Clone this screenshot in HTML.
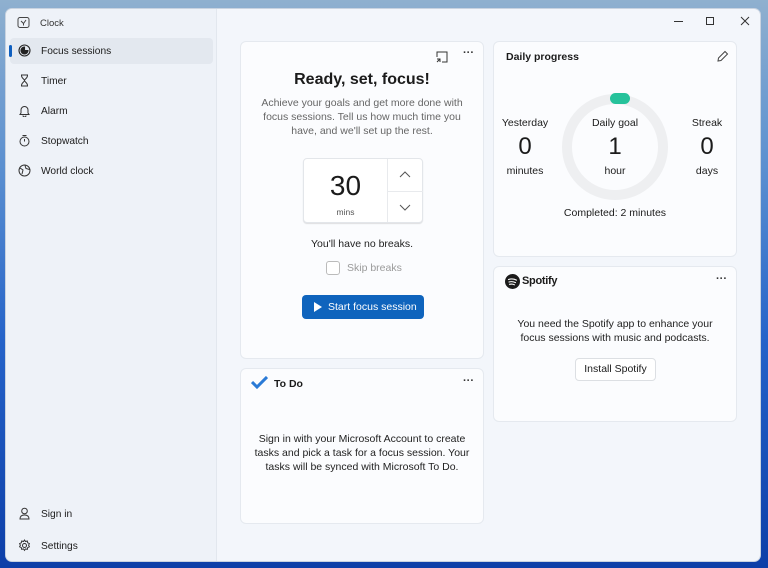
<!DOCTYPE html>
<html><head><style>
*{margin:0;padding:0;box-sizing:border-box}
body{width:768px;height:568px;overflow:hidden;font-family:"Liberation Sans",sans-serif;color:#1b1b1b;position:relative;
background:linear-gradient(180deg,#8fb0cf 0%,#5a8fd0 30%,#2563c9 60%,#0d3fa8 100%)}
.win{position:absolute;left:5px;top:8px;width:756px;height:554px;background:#f3f6fb;border-radius:7px;overflow:hidden;border:1px solid #c9d3e0}
.side{position:absolute;left:0;top:0;width:211px;height:100%;background:#eef2f8;border-right:1px solid #e2e7ee}
.abs{position:absolute}
.nav{position:absolute;left:4px;width:203px;height:26px;font-size:10.2px;display:flex;align-items:center;padding-left:31px;color:#1b1b1b}
.nav svg{position:absolute;left:8px;top:6px}
.card{position:absolute;background:#fbfcfe;border:1px solid #e5e9ef;border-radius:6px}
.c{text-align:center;position:absolute;left:0;right:0}
.dots{position:absolute;font-size:11px;letter-spacing:0px;font-weight:bold;color:#333}
</style></head><body>
<div class="win">
 <div class="side">
  <svg class="abs" style="left:11px;top:7px" width="13" height="13" viewBox="0 0 13 13" fill="none" stroke="#444" stroke-width="1"><rect x="1" y="1.5" width="11" height="10" rx="2"/><path d="M4 5l2.5 2.5L9 4M6.5 7.5v2"/></svg>
  <div class="abs" style="left:34px;top:9px;font-size:9.5px;color:#333">Clock</div>
  <div class="nav" style="top:29px;background:#e3e8ef;border-radius:4px"><svg width="13" height="13" viewBox="0 0 13 13" fill="none" stroke="#222" stroke-width="1.1"><circle cx="6.5" cy="6.5" r="5.5"/><path d="M6.5 3a3.5 3.5 0 1 0 3.5 3.5H6.5z" fill="#222"/></svg>Focus sessions</div>
  <div class="abs" style="left:3px;top:36px;width:3px;height:12px;background:#0f5fbf;border-radius:2px"></div>
  <div class="nav" style="top:59px"><svg width="13" height="13" viewBox="0 0 13 13" fill="none" stroke="#333" stroke-width="1"><path d="M3 1h7M3 12h7M3.5 1.5c0 3 3 3.5 3 5s-3 2-3 5M9.5 1.5c0 3-3 3.5-3 5s3 2 3 5"/></svg>Timer</div>
  <div class="nav" style="top:89px"><svg width="13" height="13" viewBox="0 0 13 13" fill="none" stroke="#333" stroke-width="1"><path d="M3 9V6a3.5 3.5 0 0 1 7 0v3l1 1.5H2z M5 11.5a1.5 1.5 0 0 0 3 0"/></svg>Alarm</div>
  <div class="nav" style="top:119px"><svg width="13" height="13" viewBox="0 0 13 13" fill="none" stroke="#333" stroke-width="1"><circle cx="6.5" cy="7.5" r="4.5"/><path d="M4.5 1.5h4M6.5 7.5V5"/></svg>Stopwatch</div>
  <div class="nav" style="top:149px"><svg width="13" height="13" viewBox="0 0 13 13" fill="none" stroke="#333" stroke-width="1"><circle cx="6.5" cy="6.5" r="5.5"/><path d="M2 4l3 2-1 4M7 1.5l1 3 3.5 1"/></svg>World clock</div>
  <div class="nav" style="top:492px"><svg width="13" height="13" viewBox="0 0 13 13" fill="none" stroke="#333" stroke-width="1"><circle cx="6.5" cy="4" r="2.8"/><path d="M2 12c0-3 2-4 4.5-4S11 9 11 12z"/></svg>Sign in</div>
  <div class="nav" style="top:524px"><svg width="13" height="13" viewBox="0 0 13 13" fill="none" stroke="#333" stroke-width="1"><circle cx="6.5" cy="6.5" r="2"/><path d="M6.5 1l1 1.5 1.8-.5.4 1.8 1.7.8-.8 1.6.8 1.6-1.7.8-.4 1.8-1.8-.5-1 1.5-1-1.5-1.8.5-.4-1.8-1.7-.8.8-1.6-.8-1.6 1.7-.8.4-1.8 1.8.5z"/></svg>Settings</div>
 </div>
 <!-- title buttons -->
 <div class="abs" style="left:668px;top:12px;width:9px;height:1px;background:#333"></div>
 <div class="abs" style="left:700px;top:8px;width:8px;height:8px;border:1px solid #333"></div>
 <svg class="abs" style="left:734px;top:7px" width="10" height="10" viewBox="0 0 10 10" stroke="#333" stroke-width="1"><path d="M1 1l8 8M9 1l-8 8"/></svg>

 <!-- focus card -->
 <div class="card" style="left:234px;top:32px;width:244px;height:318px">
  <svg class="abs" style="left:195px;top:9px" width="12" height="12" viewBox="0 0 12 12" fill="none" stroke="#333" stroke-width="1"><path d="M1 6V1h10v10H6M1 8h3v3M1 11l3-3"/></svg>
  <div class="dots" style="left:222px;top:5px">···</div>
  <div class="c" style="top:29px;font-size:16px;font-weight:bold;color:#1b1b1b">Ready, set, focus!</div>
  <div class="c" style="top:54px;font-size:10.5px;line-height:14px;color:#666">Achieve your goals and get more done with<br>focus sessions. Tell us how much time you<br>have, and we'll set up the rest.</div>
  <div class="abs" style="left:62px;top:116px;width:120px;height:65px;background:#fff;border:1px solid #e3e6ea;border-radius:4px;box-shadow:0 1px 1px rgba(0,0,0,.12)">
   <div class="abs" style="left:0;width:83px;top:11px;text-align:center;font-size:28px;color:#1b1b1b">30</div>
   <div class="abs" style="left:0;width:83px;top:48px;text-align:center;font-size:8.5px;color:#555">mins</div>
   <div class="abs" style="left:83px;top:0;width:1px;height:63px;background:#e8eaed"></div>
   <div class="abs" style="left:84px;top:32px;width:35px;height:1px;background:#e8eaed"></div>
   <svg class="abs" style="left:95px;top:12px" width="12" height="8" viewBox="0 0 12 8" fill="none" stroke="#555"><path d="M1 6l5-5 5 5"/></svg>
   <svg class="abs" style="left:95px;top:44px" width="12" height="8" viewBox="0 0 12 8" fill="none" stroke="#555"><path d="M1 2l5 5 5-5"/></svg>
  </div>
  <div class="c" style="top:196px;font-size:10.5px;color:#222">You'll have no breaks.</div>
  <div class="abs" style="left:85px;top:219px;width:14px;height:14px;border:1px solid #bbb;border-radius:3px;background:#fff"></div>
  <div class="abs" style="left:106px;top:220px;font-size:10.5px;color:#9a9a9a">Skip breaks</div>
  <div class="abs" style="left:61px;top:253px;width:122px;height:24px;background:#0f64bd;border-radius:4px;color:#fff;font-size:10.5px;line-height:24px;padding-left:26px">Start focus session</div>
  <svg class="abs" style="left:72px;top:259px" width="10" height="12" viewBox="0 0 10 12"><path d="M1 1l8 5-8 5z" fill="#fff"/></svg>
 </div>

 <!-- To Do -->
 <div class="card" style="left:234px;top:359px;width:244px;height:156px">
  <svg class="abs" style="left:10px;top:7px" width="17" height="13" viewBox="0 0 17 13"><path d="M1 6l5 5L16 1" fill="none" stroke="#2a7ad6" stroke-width="3"/></svg>
  <div class="abs" style="left:33px;top:9px;font-size:10.5px;font-weight:bold">To Do</div>
  <div class="dots" style="left:222px;top:6px">···</div>
  <div class="c" style="top:63px;font-size:10.5px;line-height:14px;color:#222">Sign in with your Microsoft Account to create<br>tasks and pick a task for a focus session. Your<br>tasks will be synced with Microsoft To Do.</div>
 </div>

 <!-- Daily progress -->
 <div class="card" style="left:487px;top:32px;width:244px;height:216px">
  <div class="abs" style="left:12px;top:9px;font-size:10.5px;font-weight:bold">Daily progress</div>
  <svg class="abs" style="left:222px;top:8px" width="13" height="13" viewBox="0 0 13 13" fill="none" stroke="#444"><path d="M2 11l.5-3L9 1.5l2.5 2.5L5 10.5z"/></svg>
  <div class="abs" style="left:68px;top:52px;width:106px;height:106px;border-radius:50%;border:10px solid #eeeff1"></div>
  <div class="abs" style="left:116px;top:51px;width:20px;height:11px;border-radius:6px;background:#26c29b"></div>
  <div class="abs" style="left:0;width:62px;top:75px;text-align:center;font-size:10.5px">Yesterday</div>
  <div class="abs" style="left:0;width:62px;top:91px;text-align:center;font-size:24px">0</div>
  <div class="abs" style="left:0;width:62px;top:123px;text-align:center;font-size:10.5px">minutes</div>
  <div class="abs" style="left:71px;width:100px;top:75px;text-align:center;font-size:10.5px">Daily goal</div>
  <div class="abs" style="left:71px;width:100px;top:91px;text-align:center;font-size:24px">1</div>
  <div class="abs" style="left:71px;width:100px;top:123px;text-align:center;font-size:10.5px">hour</div>
  <div class="abs" style="left:188px;width:50px;top:75px;text-align:center;font-size:10.5px">Streak</div>
  <div class="abs" style="left:188px;width:50px;top:91px;text-align:center;font-size:24px">0</div>
  <div class="abs" style="left:188px;width:50px;top:123px;text-align:center;font-size:10.5px">days</div>
  <div class="c" style="top:165px;font-size:10.5px">Completed: 2 minutes</div>
 </div>

 <!-- Spotify -->
 <div class="card" style="left:487px;top:257px;width:244px;height:156px">
  <svg class="abs" style="left:11px;top:7px" width="15" height="15" viewBox="0 0 15 15"><circle cx="7.5" cy="7.5" r="7.5" fill="#1b1b1b"/><path d="M3.5 5.5c2.5-.8 5.5-.6 8 .6M4 8c2-.6 4.5-.4 6.5.6M4.5 10.3c1.7-.4 3.5-.3 5 .5" stroke="#fff" stroke-width="1.1" fill="none" stroke-linecap="round"/></svg>
  <div class="abs" style="left:28px;top:8px;font-size:11px;font-weight:bold;letter-spacing:-.3px">Spotify</div>
  <div class="dots" style="left:222px;top:6px">···</div>
  <div class="c" style="top:50px;font-size:10.5px;line-height:14px;color:#222">You need the Spotify app to enhance your<br>focus sessions with music and podcasts.</div>
  <div class="abs" style="left:81px;top:91px;width:81px;height:23px;background:#fff;border:1px solid #dcdfe3;border-radius:4px;font-size:10.5px;line-height:21px;text-align:center">Install Spotify</div>
 </div>
</div>
</body></html>
